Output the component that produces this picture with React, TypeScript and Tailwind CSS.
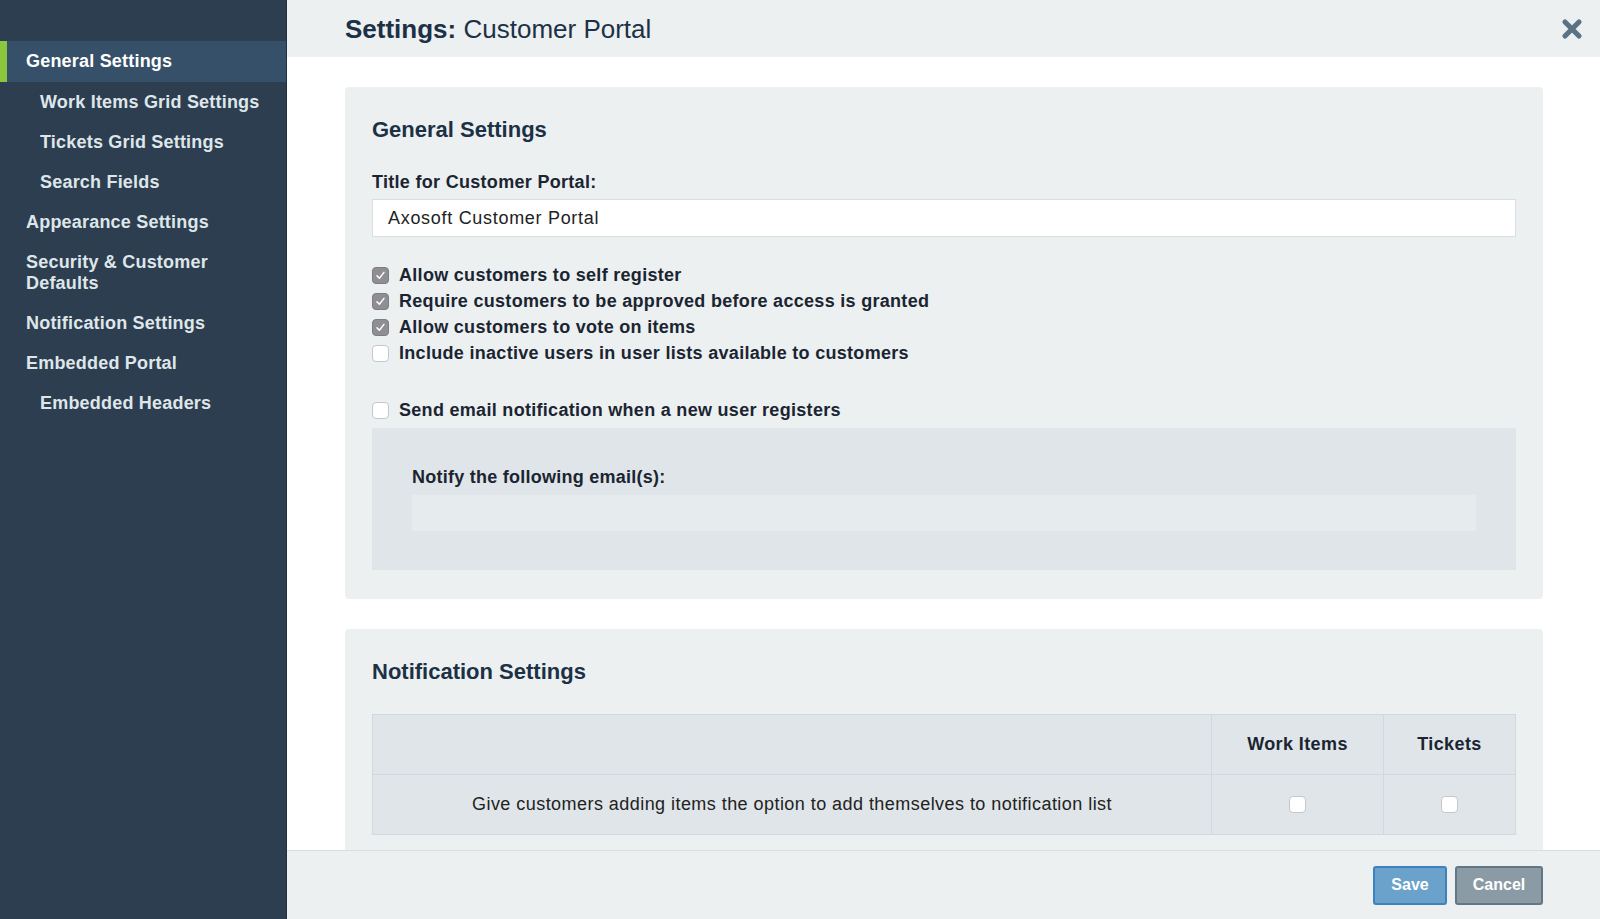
import React from "react";

const navItems: { label: string; sub?: boolean; active?: boolean }[] = [
  { label: "General Settings", active: true },
  { label: "Work Items Grid Settings", sub: true },
  { label: "Tickets Grid Settings", sub: true },
  { label: "Search Fields", sub: true },
  { label: "Appearance Settings" },
  { label: "Security & Customer Defaults" },
  { label: "Notification Settings" },
  { label: "Embedded Portal" },
  { label: "Embedded Headers", sub: true },
];

function CheckBox({ checked }: { checked?: boolean }) {
  if (checked) {
    return (
      <span className="flex h-[17px] w-[17px] shrink-0 items-center justify-center rounded-[4px] border border-[#7d7d82] bg-[#8e8e93]">
        <svg width="11" height="11" viewBox="0 0 12 12" fill="none">
          <path d="M2.2 6.4 L4.8 9 L9.8 2.6" stroke="#ffffff" strokeWidth="1.6" strokeLinecap="round" strokeLinejoin="round" />
        </svg>
      </span>
    );
  }
  return <span className="block h-[17px] w-[17px] shrink-0 rounded-[4px] border border-[#c3c8cc] bg-white" />;
}

function CheckRow({ checked, label }: { checked?: boolean; label: string }) {
  return (
    <div className="flex h-[26px] items-center gap-[10px]">
      <CheckBox checked={checked} />
      <span className="text-[18px] font-bold leading-[26px] tracking-[0.3px] text-[#1b2531]">{label}</span>
    </div>
  );
}

export default function App() {
  return (
    <div className="flex h-[919px] w-[1600px] overflow-hidden font-['Liberation_Sans',Arial,sans-serif]">
      <aside className="w-[287px] shrink-0 border-r border-[#22313f] bg-[#2c3e50] pt-[41px]">
        {navItems.map((item) => (
          <div
            key={item.label}
            className={
              item.active
                ? "relative bg-[#36506a] pb-[10px] pl-[26px] pr-[20px] pt-[10px] text-[18px] font-bold leading-[21px] tracking-[0.2px] text-white"
                : item.sub
                ? "pb-[9.5px] pl-[40px] pr-[20px] pt-[9.5px] text-[18px] font-bold leading-[21px] tracking-[0.2px] text-[#dfe6ea]"
                : "pb-[9.5px] pl-[26px] pr-[20px] pt-[9.5px] text-[18px] font-bold leading-[21px] tracking-[0.2px] text-[#dfe6ea]"
            }
          >
            {item.active && <span className="absolute bottom-0 left-0 top-0 w-[7px] bg-[#8cc63e]" />}
            {item.label}
          </div>
        ))}
      </aside>

      <div className="flex min-w-0 flex-1 flex-col">
        <header className="flex h-[57px] shrink-0 items-center justify-between bg-[#ecf0f1] pl-[58px] pr-[17px]">
          <h1 className="text-[26px] leading-[30px] text-[#1c3146]">
            <span className="font-bold">Settings:</span> Customer Portal
          </h1>
          <svg width="22" height="22" viewBox="0 0 22 22">
            <path d="M4 4 L18 18 M18 4 L4 18" stroke="#5a7384" strokeWidth="5.2" strokeLinecap="round" />
          </svg>
        </header>

        <main className="min-h-0 flex-1 overflow-hidden bg-white pl-[58px] pr-[57px] pt-[30px]">
          <section className="rounded-[4px] bg-[#ecf0f1] px-[27px] pb-[29px] pt-[30px]">
            <h2 className="text-[22px] font-bold leading-[26px] text-[#1c3146]">General Settings</h2>
            <label className="mt-[28px] block text-[18px] font-bold leading-[22px] tracking-[0.3px] text-[#1b2531]">
              Title for Customer Portal:
            </label>
            <div className="mt-[6px] flex h-[38px] items-center border border-[#d8dfe3] bg-white px-[15px] text-[18px] tracking-[0.7px] text-[#222]">
              Axosoft Customer Portal
            </div>

            <div className="mt-[25px]">
              <CheckRow checked label="Allow customers to self register" />
              <CheckRow checked label="Require customers to be approved before access is granted" />
              <CheckRow checked label="Allow customers to vote on items" />
              <CheckRow label="Include inactive users in user lists available to customers" />
            </div>

            <div className="mt-[31px]">
              <CheckRow label="Send email notification when a new user registers" />
            </div>

            <div className="mt-[5px] bg-[#dfe5e8] px-[40px] pb-[39px] pt-[38px]">
              <div className="text-[18px] font-bold leading-[22px] tracking-[0.25px] text-[#1b2531]">Notify the following email(s):</div>
              <div className="mt-[7px] h-[36px] bg-[#e6ebed]" />
            </div>
          </section>

          <section className="mt-[30px] rounded-[4px] bg-[#ecf0f1] px-[27px] pb-[28px] pt-[30px]">
            <h2 className="text-[22px] font-bold leading-[26px] text-[#1c3146]">Notification Settings</h2>
            <table className="mt-[29px] w-full border-collapse bg-[#dfe5e8] text-[18px] text-[#1b2531]">
              <colgroup>
                <col className="w-[839px]" />
                <col className="w-[172px]" />
                <col />
              </colgroup>
              <thead>
                <tr className="h-[60px]">
                  <th className="border border-[#d0d9dd]" />
                  <th className="border border-[#d0d9dd] font-bold tracking-[0.4px]">Work Items</th>
                  <th className="border border-[#d0d9dd] font-bold tracking-[0.4px]">Tickets</th>
                </tr>
              </thead>
              <tbody>
                <tr className="h-[60px]">
                  <td className="border border-[#d0d9dd] text-center font-normal tracking-[0.45px] text-[#222]">
                    Give customers adding items the option to add themselves to notification list
                  </td>
                  <td className="border border-[#d0d9dd]">
                    <span className="mx-auto block h-[17px] w-[17px] rounded-[4px] border border-[#c3c8cc] bg-white" />
                  </td>
                  <td className="border border-[#d0d9dd]">
                    <span className="mx-auto block h-[17px] w-[17px] rounded-[4px] border border-[#c3c8cc] bg-white" />
                  </td>
                </tr>
              </tbody>
            </table>
          </section>
        </main>

        <footer className="flex h-[69px] shrink-0 items-center justify-end gap-[8px] border-t border-[#d6dee2] bg-[#ecf0f1] pr-[57px]">
          <button className="h-[39px] w-[74px] rounded-[3px] border-2 border-[#3d82bd] bg-[#6aa2cb] text-[16px] font-bold text-white">
            Save
          </button>
          <button className="h-[39px] w-[88px] rounded-[3px] border-2 border-[#647683] bg-[#8a9ba6] text-[16px] font-bold text-white">
            Cancel
          </button>
        </footer>
      </div>
    </div>
  );
}
